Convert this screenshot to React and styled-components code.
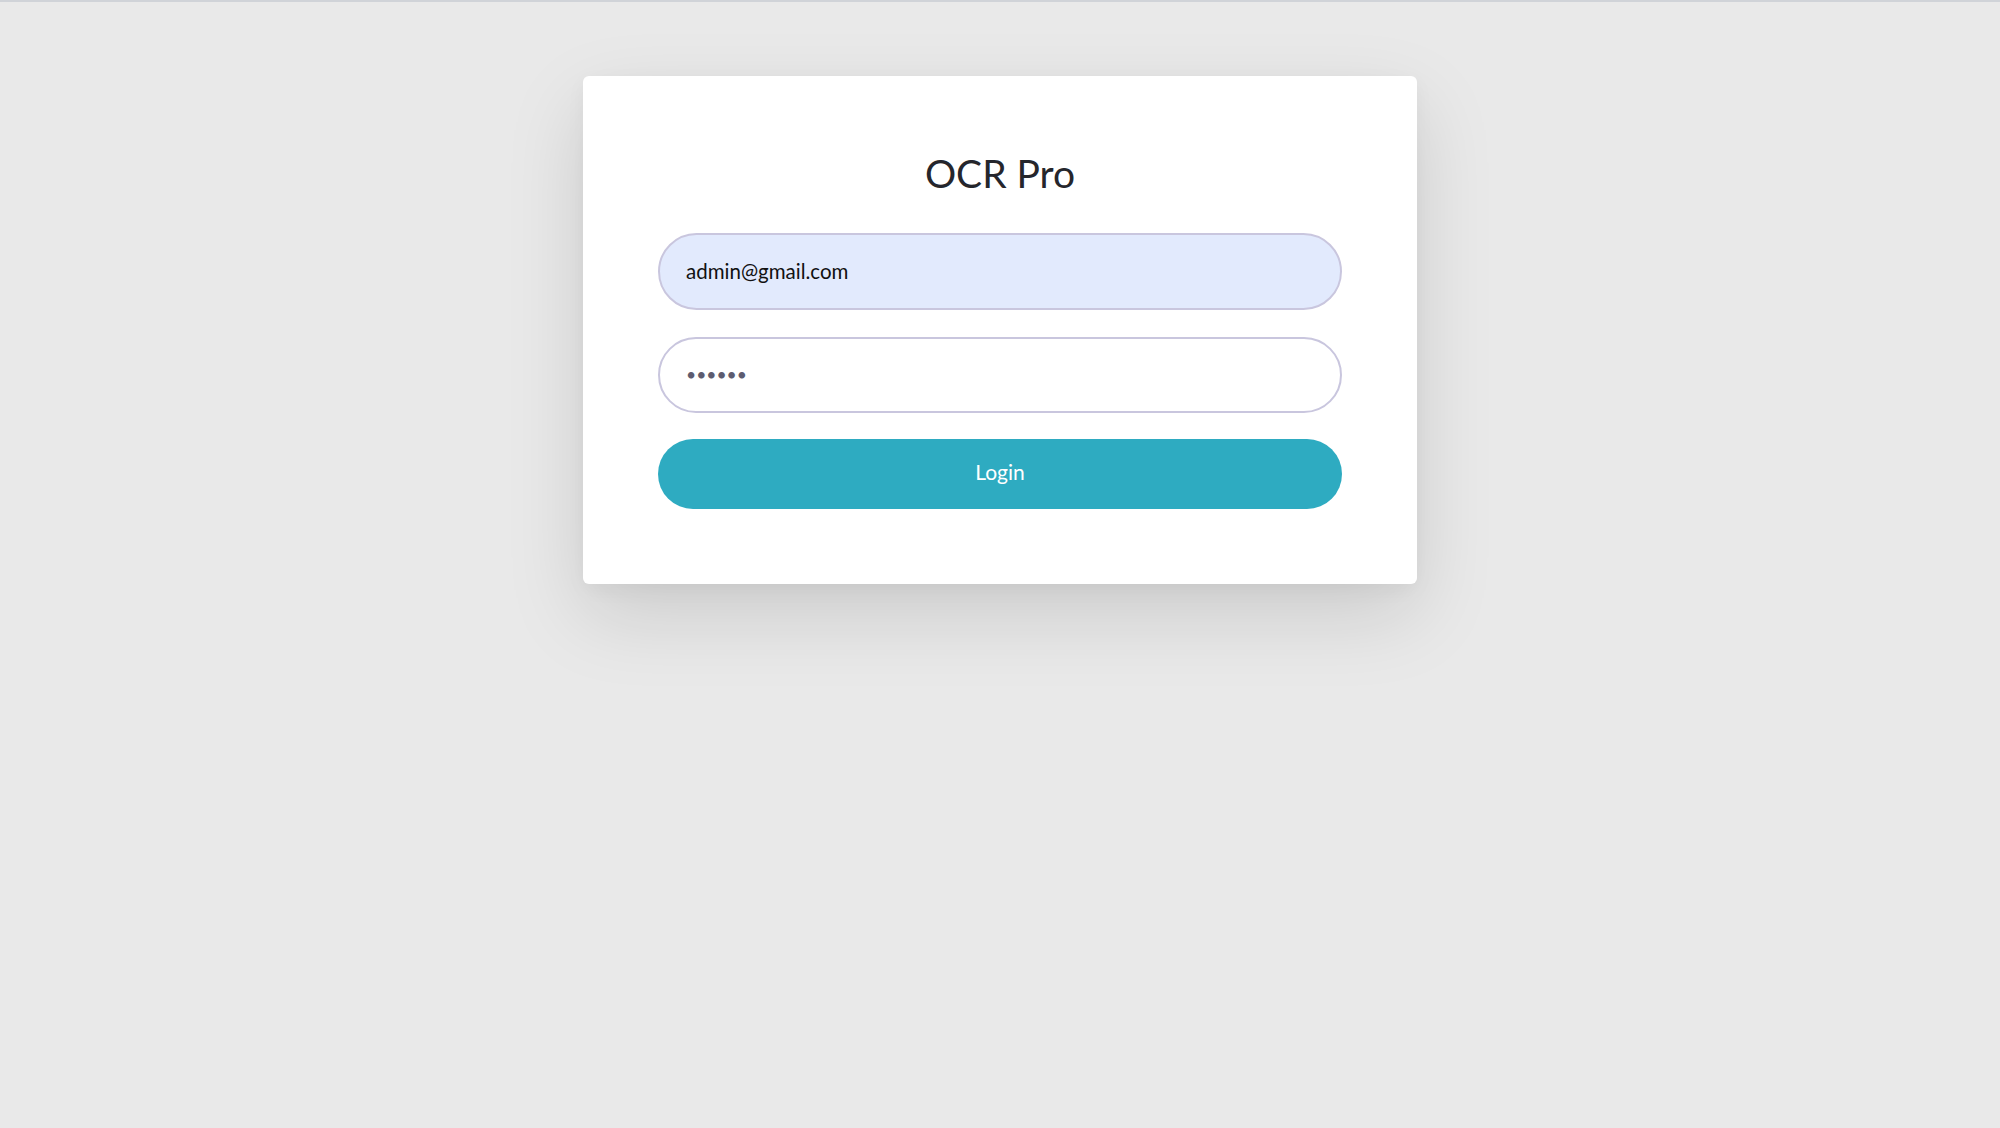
import React, { useState } from 'react'
import styled, { createGlobalStyle } from 'styled-components'

const GlobalStyle = createGlobalStyle`
  html, body {
    margin: 0;
    padding: 0;
    background: #e9e9e9;
  }

  body {
    min-height: 100vh;
    border-top: 2px solid #d0d3d8;
    box-sizing: border-box;
    font-family: Lato, "Open Sans", sans-serif;
    color: #212529;
  }
`

const Page = styled.main`
  display: flex;
  justify-content: center;
  padding-top: 74px;
`

const Card = styled.form`
  box-sizing: border-box;
  width: 834px;
  height: 508px;
  padding: 62px 75px 75px;
  background: #ffffff;
  border-radius: 6px;
  box-shadow: 0 30px 80px rgba(0, 0, 0, 0.13), 0 6px 20px rgba(0, 0, 0, 0.04);
  display: flex;
  flex-direction: column;
`

const Title = styled.h1`
  margin: 0 0 25px;
  font-size: 39px;
  font-weight: 400;
  line-height: 70px;
  text-align: center;
  color: #25262c;
`

const Field = styled.input`
  box-sizing: border-box;
  width: 100%;
  height: 77px;
  margin-bottom: ${({ last }) => (last ? 26 : 27)}px;
  padding: 0 26px;
  border: 2px solid #c9c6de;
  border-radius: 40px;
  background: ${({ filled }) => (filled ? '#e2eafd' : '#ffffff')};
  font-family: Lato, "Open Sans", sans-serif;
  font-size: 20.5px;
  color: #111111;
  outline: none;

  &[type='password'] {
    color: #5d5c70;
    font-size: 17.5px;
    letter-spacing: 0;
  }
`

const LoginButton = styled.button`
  height: 70px;
  width: 100%;
  padding: 0 0 5px;
  border: none;
  border-radius: 36px;
  background: #2eabc1;
  color: #ffffff;
  font-family: Lato, "Open Sans", sans-serif;
  font-size: 21px;
  cursor: pointer;
`

export default function App () {
  const [email, setEmail] = useState('admin@gmail.com')
  const [password, setPassword] = useState('123456')

  return (
    <>
      <GlobalStyle />
      <Page>
        <Card onSubmit={e => e.preventDefault()}>
          <Title>OCR Pro</Title>
          <Field
            type='email'
            filled
            value={email}
            onChange={e => setEmail(e.target.value)}
          />
          <Field
            type='password'
            last
            value={password}
            onChange={e => setPassword(e.target.value)}
          />
          <LoginButton type='submit'>Login</LoginButton>
        </Card>
      </Page>
    </>
  )
}
